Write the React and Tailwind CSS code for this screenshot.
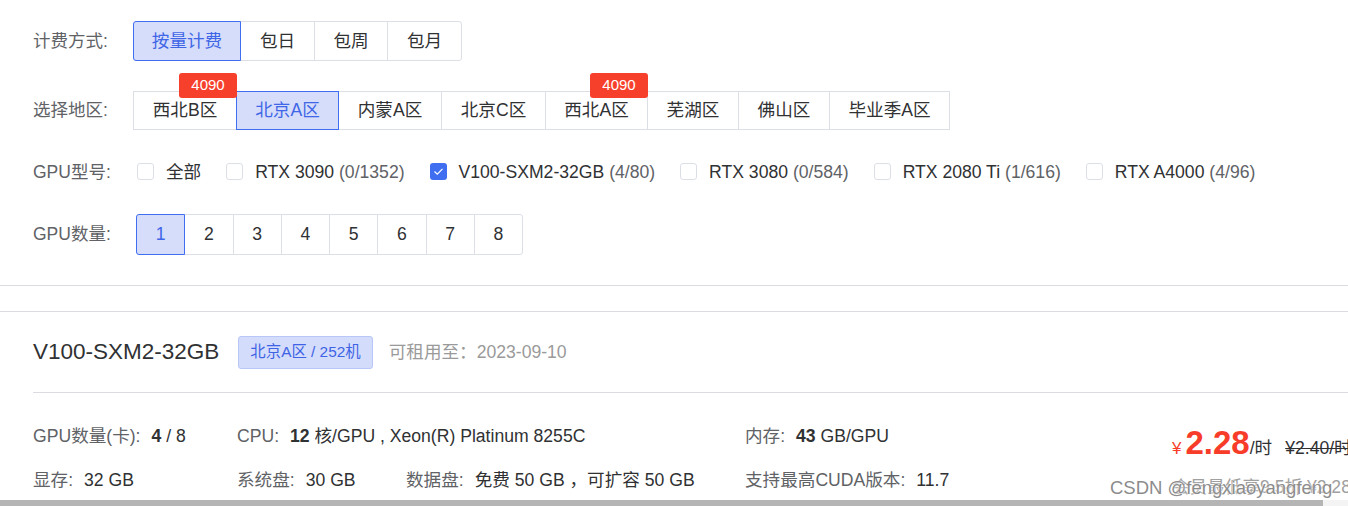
import React from "react";

const billing = [
  { t: "按量计费", w: "w-[108px]", on: true },
  { t: "包日", w: "w-[75px]" },
  { t: "包周", w: "w-[74px]" },
  { t: "包月", w: "w-[75px]" },
];

const regions = [
  { t: "西北B区", w: "w-[104px]", badge: "4090" },
  { t: "北京A区", w: "w-[103px]", on: true },
  { t: "内蒙A区", w: "w-[104px]" },
  { t: "北京C区", w: "w-[105px]" },
  { t: "西北A区", w: "w-[103px]", badge: "4090" },
  { t: "芜湖区", w: "w-[92px]" },
  { t: "佛山区", w: "w-[92px]" },
  { t: "毕业季A区", w: "w-[121px]" },
];

const gpus = [
  { t: "全部" },
  { t: "RTX 3090", c: "(0/1352)" },
  { t: "V100-SXM2-32GB", c: "(4/80)", on: true },
  { t: "RTX 3080", c: "(0/584)" },
  { t: "RTX 2080 Ti", c: "(1/616)" },
  { t: "RTX A4000", c: "(4/96)" },
];

const counts = [1, 2, 3, 4, 5, 6, 7, 8];

const Label = ({ children }) => (
  <div className="w-[100px] shrink-0 text-[17.5px] text-[#606266]">{children}</div>
);

const Check = ({ on }) =>
  on ? (
    <span className="w-[17px] h-[17px] rounded-[3px] bg-[#3f6ef0] flex items-center justify-center">
      <svg width="11" height="9" viewBox="0 0 11 9" fill="none">
        <path d="M1.5 4.5 L4.3 7.2 L9.5 1.8" stroke="#fff" strokeWidth="1.2" />
      </svg>
    </span>
  ) : (
    <span className="w-[17px] h-[17px] rounded-[3px] border border-[#dcdfe6] bg-white" />
  );

const App = () => {
  return (
    <div className="relative w-full h-[506px] overflow-hidden bg-white flex flex-col font-['Liberation_Sans','Noto_Sans_CJK_SC',sans-serif] text-[#303133]">
      <div className="flex-1 overflow-hidden">
        {/* filters */}
        <div className="pl-[33px] pt-[21px] pb-[30px] border-b border-[#dcdce0]">
          <div className="flex items-center h-[40px]">
            <Label>计费方式:</Label>
            <div className="flex">
              {billing.map((b, i) => (
                <div
                  key={i}
                  className={`${b.w} h-[40px] flex items-center justify-center border text-[17.6px] ${
                    i > 0 ? "-ml-px" : ""
                  } ${
                    b.on
                      ? "relative z-10 bg-[#d6ddfb] border-[#3f6ef0] text-[#3f66e6] rounded-l-[3px]"
                      : "border-[#dcdfe6] bg-white"
                  } ${i === billing.length - 1 ? "rounded-r-[3px]" : ""}`}
                >
                  {b.t}
                </div>
              ))}
            </div>
          </div>

          <div className="flex items-center h-[39px] mt-[30px]">
            <Label>选择地区:</Label>
            <div className="flex">
              {regions.map((r, i) => (
                <div
                  key={i}
                  className={`relative ${r.w} h-[39px] flex items-center justify-center border text-[17.6px] ${
                    i > 0 ? "-ml-px" : ""
                  } ${
                    r.on
                      ? "z-10 bg-[#d6ddfb] border-[#3f6ef0] text-[#3f66e6]"
                      : "border-[#dcdfe6] bg-white"
                  }`}
                >
                  {r.t}
                  {r.badge && (
                    <span className="absolute -top-[19px] -right-px z-20 w-[58px] h-[25px] rounded-[3px] bg-[#f7402c] text-white text-[15px] flex items-center justify-center">
                      {r.badge}
                    </span>
                  )}
                </div>
              ))}
            </div>
          </div>

          <div className="flex items-center h-[40px] mt-[22px]">
            <Label>GPU型号:</Label>
            <div className="flex items-center gap-[25px] pl-[4px]">
              {gpus.map((g, i) => (
                <div key={i} className="flex items-center gap-[12px] text-[17.6px]">
                  <Check on={g.on} />
                  <span className="whitespace-nowrap">
                    {g.t}
                    {g.c && <span className="text-[#606266]"> {g.c}</span>}
                  </span>
                </div>
              ))}
            </div>
          </div>

          <div className="flex items-center h-[41px] mt-[22px]">
            <Label>GPU数量:</Label>
            <div className="flex ml-[3px]">
              {counts.map((n, i) => (
                <div
                  key={n}
                  className={`w-[49.25px] h-[41px] flex items-center justify-center border text-[17.6px] ${
                    i > 0 ? "-ml-px" : ""
                  } ${
                    i === 0
                      ? "relative z-10 bg-[#d6ddfb] border-[#3f6ef0] text-[#3f66e6] rounded-l-[3px]"
                      : "border-[#dcdfe6] bg-white"
                  } ${i === counts.length - 1 ? "rounded-r-[3px]" : ""}`}
                >
                  {n}
                </div>
              ))}
            </div>
          </div>
        </div>

        {/* machine card */}
        <div className="mt-[25px] border-t border-[#dcdce0] pl-[33px]">
          <div className="h-[81px] flex items-center border-b border-[#dcdce0]">
            <span className="text-[22.5px] text-[#303133]">V100-SXM2-32GB</span>
            <span className="ml-[19px] h-[33px] px-[11px] flex items-center rounded-[3px] border border-[#b9c6f8] bg-[#d4dcfc] text-[15.4px] text-[#3e63e4]">
              北京A区 / 252机
            </span>
            <span className="ml-[16px] text-[17.6px] text-[#9a9a9a]">可租用至：2023-09-10</span>
          </div>

          <div className="flex pt-[21px] text-[17.6px]">
            <div className="w-[1139px] shrink-0">
              <div className="flex items-center h-[44px]">
                <div className="w-[204px]">
                  <span className="text-[#606266]">GPU数量(卡):</span>
                  <span className="ml-[11px] font-bold">4</span> / 8
                </div>
                <div className="w-[508px]">
                  <span className="text-[#606266]">CPU:</span>
                  <span className="ml-[11px] font-bold">12</span> 核/GPU , Xeon(R) Platinum 8255C
                </div>
                <div>
                  <span className="text-[#606266]">内存:</span>
                  <span className="ml-[11px] font-bold">43</span> GB/GPU
                </div>
              </div>
              <div className="flex items-center h-[44px]">
                <div className="w-[204px]">
                  <span className="text-[#606266]">显存:</span>
                  <span className="ml-[11px]">32 GB</span>
                </div>
                <div className="w-[169px]">
                  <span className="text-[#606266]">系统盘:</span>
                  <span className="ml-[11px]">30 GB</span>
                </div>
                <div className="w-[339px]">
                  <span className="text-[#606266]">数据盘:</span>
                  <span className="ml-[11px]">免费 50 GB ，可扩容 50 GB</span>
                </div>
                <div>
                  <span className="text-[#606266]">支持最高CUDA版本:</span>
                  <span className="ml-[11px]">11.7</span>
                </div>
              </div>
            </div>

            <div className="shrink-0 whitespace-nowrap pt-[12px]">
              <div className="flex items-baseline h-[42px]">
                <span className="text-[17px] text-[#f73d2a]">¥</span>
                <span className="ml-[4px] text-[33px] font-bold leading-none text-[#f73d2a]">2.28</span>
                <span className="text-[17.6px] text-[#303133]">/时</span>
                <span className="ml-[13px] text-[17.6px] text-[#303133] line-through">¥2.40/时</span>
              </div>
              <div className="mt-[6px] text-[17.6px] text-[#a0a0a0]">会员最低享9.5折 ¥2.28/时</div>
            </div>
          </div>
        </div>
      </div>

      {/* horizontal scrollbar */}
      <div className="h-[6px] shrink-0 bg-[#f4f4f4]">
        <div className="h-full w-[1323px] bg-[#b5b5b5]" />
      </div>

      {/* watermark */}
      <div className="absolute left-[1110px] top-[474px] text-[18.5px] text-[#8c8c8c] whitespace-nowrap [text-shadow:0_0_2px_#fff,0_0_2px_#fff]">
        CSDN @fengxiaoyangfeng
      </div>
    </div>
  );
};

export default App;
